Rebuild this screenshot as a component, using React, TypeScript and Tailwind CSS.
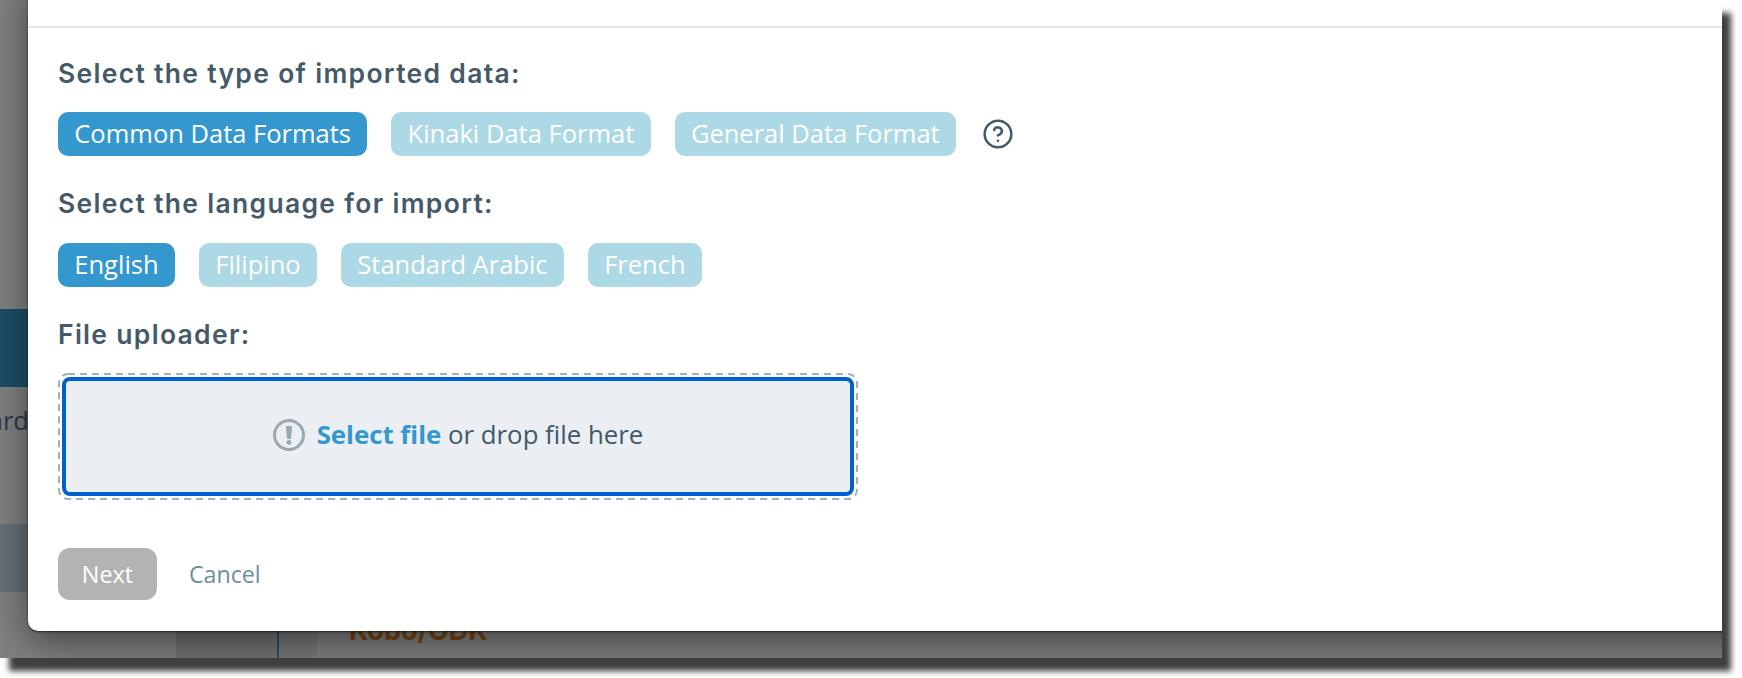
export default function App() {
  const chip = "h-[44px] px-[16.3px] rounded-[10px] flex items-center text-white text-[25.5px] leading-none";
  const on = chip + " bg-[#3498cf]";
  const off = chip + " bg-[#add8e6]";
  const heading = "font-['Inter',sans-serif] font-semibold text-[26.5px] leading-[30px] text-[#455a69] tracking-[1.3px]";
  return (
    <div className="w-[1742px] h-[678px] bg-white overflow-hidden font-['Open_Sans',sans-serif]">
      <div className="relative w-[1722px] h-[658px] overflow-hidden bg-[#808080] shadow-[9px_13px_6px_#3f3f3f]">
        <div className="absolute left-0 top-[309px] w-[60px] h-[78px] bg-[#1c4e66]" />
        <div className="absolute left-0 top-[404px] w-[29px] overflow-hidden flex justify-end text-[25.6px] leading-[34px] text-[#2a3a44]">ard</div>
        <div className="absolute left-0 top-[524px] w-[60px] h-[68px] bg-[#667075]" />
        <div className="absolute left-[176px] top-[600px] w-[101px] h-[58px] bg-[#6f7174]" />
        <div className="absolute left-[277px] top-[600px] w-[2px] h-[58px] bg-[#324a60]" />
        <div className="absolute left-[279px] top-[600px] w-[38px] h-[58px] bg-[#787878]" />
        <div className="absolute left-[349px] top-[615px] font-['Inter',sans-serif] font-bold text-[27px] leading-[32px] text-[#7a4513]">Kobo/ODK</div>

        <div className="absolute left-[28px] top-[-20px] w-[1800px] h-[651px] bg-white rounded-bl-[10px] shadow-[0_1px_2px_rgba(0,0,0,0.6),0_10px_36px_rgba(0,0,0,0.5)]">
          <div className="h-[48px] border-b-2 border-[#e5e5e5]" />
          <div className="pl-[30px] flex flex-col items-start">
            <h2 className={heading + " mt-[30px]"}>Select the type of imported data:</h2>
            <div className="flex items-center gap-[24px] mt-[24px]">
              <div className={on}>Common Data Formats</div>
              <div className={off}>Kinaki Data Format</div>
              <div className={off}>General Data Format</div>
              <svg className="ml-[2px]" width="32" height="32" viewBox="0 0 24 24" fill="none" stroke="#455a69" strokeWidth="1.9" strokeLinecap="round" strokeLinejoin="round">
                <circle cx="12" cy="12" r="10" />
                <path d="M9.09 9a3 3 0 0 1 5.83 1c0 2-3 3-3 3" />
                <path d="M12 17h.01" />
              </svg>
            </div>
            <h2 className={heading + " mt-[32px]"}>Select the language for import:</h2>
            <div className="flex items-center gap-[24px] mt-[25px]">
              <div className={on}>English</div>
              <div className={off}>Filipino</div>
              <div className={off}>Standard Arabic</div>
              <div className={off}>French</div>
            </div>
            <h2 className={heading + " mt-[32px]"}>File uploader:</h2>
            <div className="relative mt-[24px] w-[800px] h-[127px] p-[4px]">
              <div className="w-full h-full border-4 border-[#0060d0] rounded-[8px] bg-[#ebeef3] flex items-center justify-center text-[25.8px] text-[#41596a]">
                <div className="flex items-center mb-[4px]">
                  <svg className="mr-[12px]" width="32" height="32" viewBox="0 0 32 32" fill="none">
                    <circle cx="16" cy="16" r="14.5" stroke="#9aa8b0" strokeWidth="3" />
                    <path d="M13.5 7.5h5l-1 12h-3z" fill="#9aa8b0" stroke="#9aa8b0" strokeLinejoin="round" />
                    <circle cx="16" cy="23.5" r="2.4" fill="#9aa8b0" />
                  </svg>
                  <span className="font-bold text-[#3498cf]">Select file</span>
                  <span className="whitespace-pre"> or drop file here</span>
                </div>
              </div>
              <svg className="absolute inset-0 pointer-events-none" width="800" height="127" fill="none">
                <rect x="1" y="1" width="798" height="125" rx="9" stroke="#9fb0b8" strokeWidth="2" strokeDasharray="7 5" />
              </svg>
            </div>
            <div className="flex items-center mt-[48px]">
              <div className="w-[99px] h-[52px] pt-[1px] rounded-[12px] bg-[#b3b3b3] text-white text-[23.4px] flex items-center justify-center">Next</div>
              <div className="ml-[32px] text-[23.2px] text-[#6b8e9e]">Cancel</div>
            </div>
          </div>
        </div>
      </div>
    </div>
  );
}
